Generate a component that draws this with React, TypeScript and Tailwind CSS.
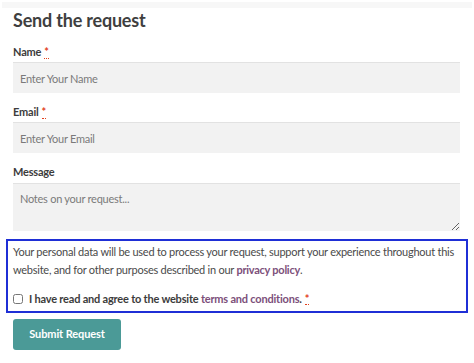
import { useState } from "react"

function Req() {
  return (
    <abbr
      title="required"
      className="text-[#e2401c] no-underline border-b border-dotted border-[#e2401c] ml-[3px] leading-none"
    >
      *
    </abbr>
  )
}

const fieldCls =
  "block w-full bg-[#f2f2f2] border-t border-[#e2e2e2] px-[7px] text-[11px] tracking-[-0.25px] text-[#3c3c3c] placeholder:text-[#7a7a7a] outline-none"

export default function App() {
  const [agree, setAgree] = useState(false)

  return (
    <div className="w-[474px] h-[363px] bg-white overflow-hidden font-['Lato',sans-serif] text-[#3c3c3c]">
      {/* faint strip from the block above */}
      <div className="mx-[2px] mt-[2px] h-[6px] bg-[#f7f7f7]" />

      <div className="px-[13px] pr-[14px]">
        <h2 className="text-[18px] font-bold leading-[24px] tracking-[-0.2px] text-[#3f3f3f]">
          Send the request
        </h2>

        <label className="block text-[11px] font-bold tracking-[-0.2px] mt-[12px] leading-[16px]">
          Name<Req />
        </label>
        <input placeholder="Enter Your Name" className={`mt-[2px] h-[31px] ${fieldCls}`} />

        <label className="block text-[11px] font-bold tracking-[-0.2px] mt-[11px] leading-[16px]">
          Email<Req />
        </label>
        <input placeholder="Enter Your Email" className={`mt-[2px] h-[31px] ${fieldCls}`} />

        <label className="block text-[11px] font-bold tracking-[-0.2px] mt-[11px] leading-[16px]">
          Message
        </label>
        <textarea
          placeholder="Notes on your request..."
          className={`mt-[3px] h-[48px] py-[7px] leading-[16px] ${fieldCls}`}
        />
      </div>

      <div className="mx-[6px] mt-[8px] border-2 border-[#1f2fd6] px-[5px] pt-[2px] pb-[4px]">
        <p className="text-[11px] leading-[18px] tracking-[-0.25px] text-[#4a4a4a]">
          Your personal data will be used to process your request, support your experience throughout this
          website, and for other purposes described in our{" "}
          <a className="font-bold text-[#7c4f7a]">privacy policy</a>.
        </p>
        <label className="flex items-center mt-[12px] text-[11px] font-bold tracking-[-0.2px] leading-[16px] text-[#3c3c3c]">
          <input
            type="checkbox"
            checked={agree}
            onChange={() => setAgree(!agree)}
            className="w-[10px] h-[10px] mr-[6px]"
          />
          I have read and agree to the website&nbsp;
          <a className="text-[#7c4f7a]">terms and conditions</a>.<Req />
        </label>
      </div>

      <div className="px-[13px] mt-[6px]">
        <button className="h-[31px] w-[108px] rounded-[3px] bg-[#4b9a97] text-white text-[11px] font-bold tracking-[-0.1px]">
          Submit Request
        </button>
      </div>
    </div>
  )
}
